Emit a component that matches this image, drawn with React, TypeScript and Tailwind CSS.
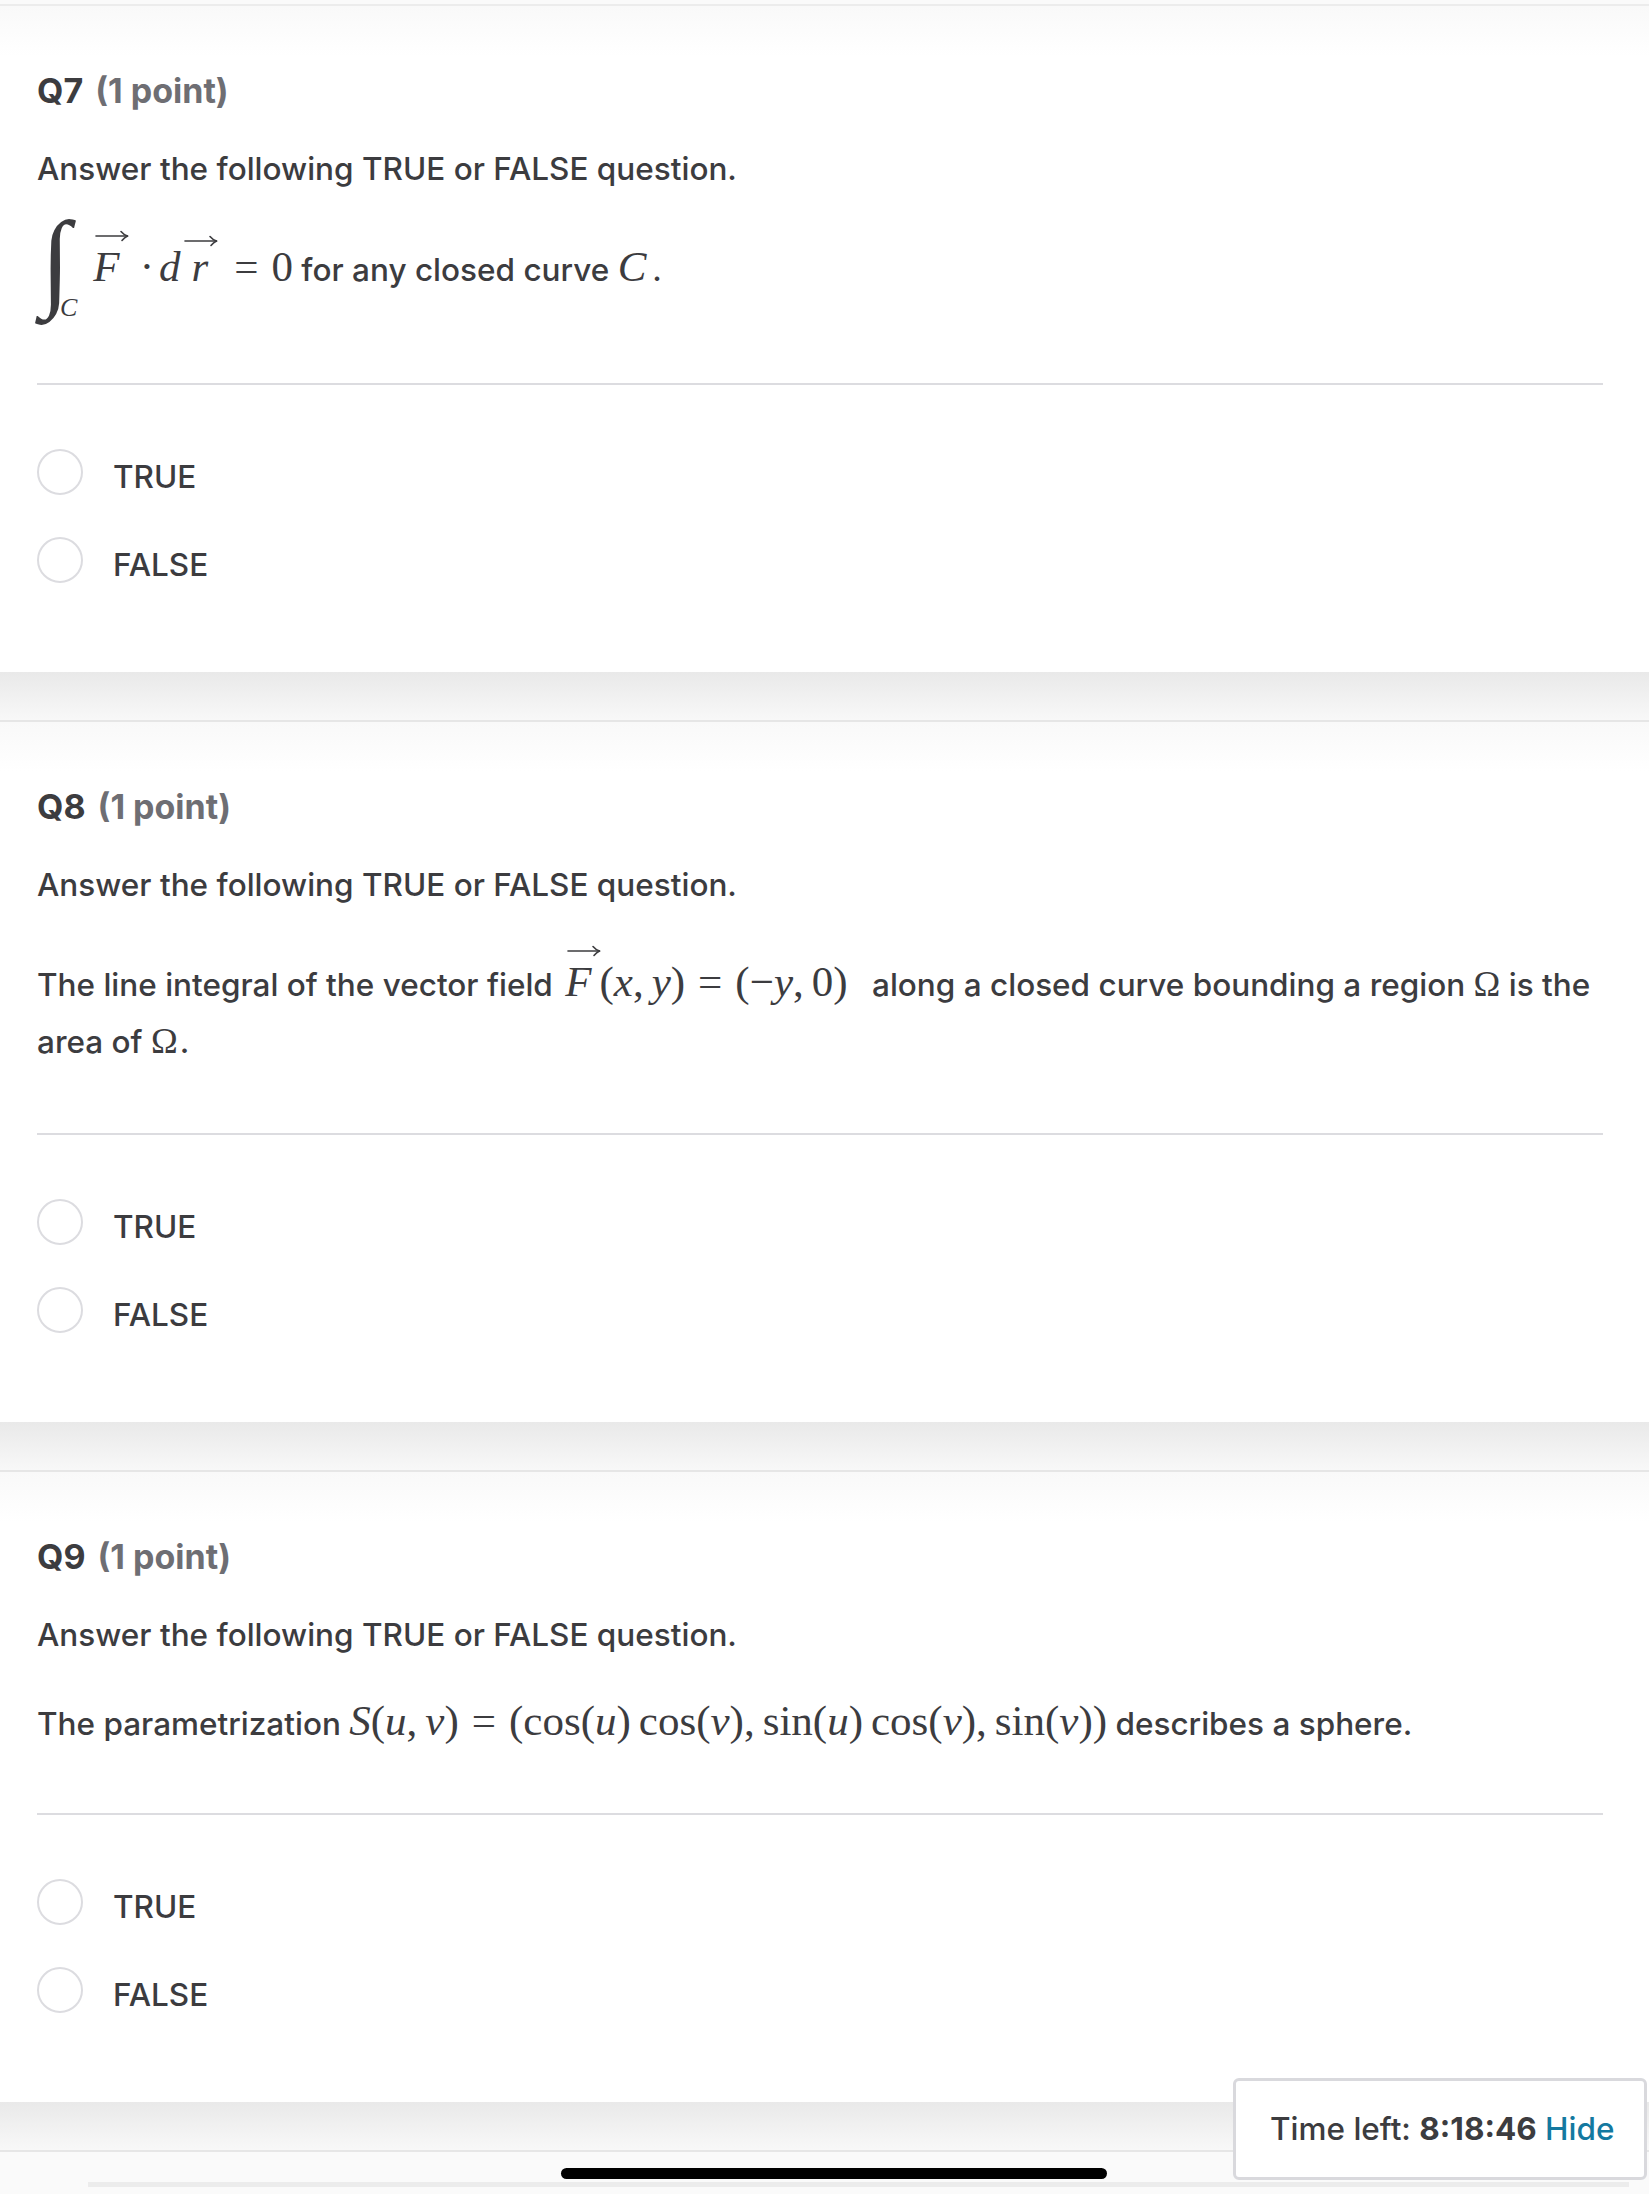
import React from 'react';

// math bits: serif face stands in for the TeX font
function M({ children }: { children: React.ReactNode }) {
  return <span className="font-[family-name:Liberation_Serif,DejaVu_Serif,serif] text-[43px] font-normal text-[#3c3c3f]">{children}</span>;
}

function V({ children }: { children: React.ReactNode }) {
  return <i className="italic">{children}</i>;
}

function Th() {
  return <span className="inline-block w-[8px]" />;
}

function Eq() {
  return <span className="mx-[13px]">=</span>;
}

function Omega() {
  return <span className="font-[family-name:Liberation_Serif,DejaVu_Serif,serif] text-[36px] font-normal">Ω</span>;
}

function Vec({
  children,
  w = 34,
  arrow = 'left-[2px] top-[-15px]',
}: {
  children: React.ReactNode;
  w?: number;
  arrow?: string;
}) {
  return (
    <span className="relative inline-block leading-none">
      {children}
      <svg
        width={w}
        height="12"
        viewBox={`0 0 ${w} 12`}
        className={`absolute ${arrow}`}
        fill="none"
        stroke="#3c3c3f"
        strokeWidth="1.6"
        strokeLinecap="round"
      >
        <path d={`M1 6 H${w - 2}`} />
        <path d={`M${w - 8} 1.5 Q${w - 5} 5 ${w - 1.5} 6`} />
        <path d={`M${w - 7} 10.5 Q${w - 4.5} 7.5 ${w - 1.5} 6`} />
      </svg>
    </span>
  );
}

function Option({ label, className }: { label: string; className: string }) {
  return (
    <div className={`flex h-[46px] items-center gap-[30px] ${className}`}>
      <span className="h-[46px] w-[46px] rounded-full border-2 border-[#dcdce0] bg-white" />
      <span className="mt-[10px] text-[31.5px] font-medium leading-none">{label}</span>
    </div>
  );
}

function Card({ num, children }: { num: number; children: React.ReactNode }) {
  return (
    <section className="bg-[linear-gradient(to_bottom,#f9f9f9,#ffffff_50px)] pl-[37px] pr-[46px] pt-[65px] pb-[89px]">
      <h2 className="h-[40px] text-[34px] font-bold leading-[40px]">
        Q{num}
        <span className="ml-[12px] text-[#6e6e73]">(1 point)</span>
      </h2>
      <p className="mt-[38px] h-[42px] text-[31.5px] font-medium leading-[40px]">
        Answer the following TRUE or FALSE question.
      </p>
      {children}
      <Option label="TRUE" className="mt-[64px]" />
      <Option label="FALSE" className="mt-[42px]" />
    </section>
  );
}

function Band() {
  return <div className="h-[50px] border-b-2 border-[#e6e6e6] bg-[linear-gradient(to_bottom,#e9e9e9,#f8f8f8)]" />;
}

export default function App() {
  return (
    <div className="relative h-[2194px] w-full overflow-hidden bg-white font-[family-name:Inter,Liberation_Sans,sans-serif] text-[#3c3c3f]">
      <div className="h-[4px] bg-[#fafafa]" />
      <div className="h-[2px] bg-[#ececec]" />

      <Card num={7}>
        <div className="mt-[42px] flex h-[90px] items-start">
          <span className="ml-[4px] h-[86px] w-[36px] font-[family-name:Liberation_Serif,DejaVu_Serif,serif] text-[108px] leading-[53px]">∫</span>
          <span className="ml-[-17px] mt-[64px] font-[family-name:Liberation_Serif,DejaVu_Serif,serif] text-[26px] italic leading-[22px]">C</span>
          <p className="ml-[16px] mt-[12px] h-[40px] text-[31.5px] font-medium leading-[40px]">
            <M>
              <Vec>
                <V>F</V>
              </Vec>
              <span className="ml-[20px] mr-[5px]">·</span>
              <V>d</V>
              <span className="inline-block w-[4px]" />
              <Vec arrow="left-0 top-[-10px]">
                <span className="inline-block px-[7px]">
                  <V>r</V>
                </span>
              </Vec>
              <span className="ml-[6px]" />
              <Eq />0
            </M>{' '}
            for any closed curve{' '}
            <M>
              <V>C</V>
            </M>
            <span className="ml-[6px]">.</span>
          </p>
        </div>
        <div className="mt-[60px] h-[2px] bg-[#dcdce0]" />
      </Card>

      <Band />

      <Card num={8}>
        <p className="mt-[47px] h-[112px] text-[31.5px] font-medium leading-[56px]">
          The line integral of the vector field{' '}
          <M>
            <span className="ml-[4px]" />
            <Vec>
              <V>F</V>
            </Vec>
            <span className="ml-[8px]">(</span>
            <V>x</V>,<Th />
            <V>y</V>)<Eq />(−<V>y</V>,<Th />0)
          </M>
          <span className="ml-[16px]" /> along a closed curve bounding a region <Omega /> is the
          <br />
          area of <Omega />
          <span className="ml-[2px]">.</span>
        </p>
        <div className="mt-[67px] h-[2px] bg-[#dcdce0]" />
      </Card>

      <Band />

      <Card num={9}>
        <p className="mt-[44px] h-[40px] text-[31.5px] font-medium leading-[40px]">
          The parametrization{' '}
          <M>
            <V>S</V>(<V>u</V>,<Th />
            <V>v</V>)<Eq />(cos(<V>u</V>)<Th />cos(<V>v</V>),<Th />sin(<V>u</V>)<Th />cos(<V>v</V>),<Th />sin(<V>v</V>))
          </M>{' '}
          describes a sphere.
        </p>
        <div className="mt-[72px] h-[2px] bg-[#dcdce0]" />
      </Card>

      <Band />

      <div className="h-[42px] bg-[#fafafa] pt-[16px]">
        <div className="ml-[561px] h-[11px] w-[546px] rounded-full bg-black" />
        <div className="ml-[88px] mt-[3px] h-[5px] w-[1541px] bg-[#ececec]" />
      </div>

      <div className="absolute left-[1233px] top-[2078px] flex h-[102px] w-[414px] items-center rounded-[6px] border-[3px] border-[#d9d9dd] bg-white pl-[34px] text-[31.5px] font-medium">
        Time left:&nbsp;<b className="font-bold">8:18:46</b>&nbsp;<span className="text-[#1479a0]">Hide</span>
      </div>
    </div>
  );
}
